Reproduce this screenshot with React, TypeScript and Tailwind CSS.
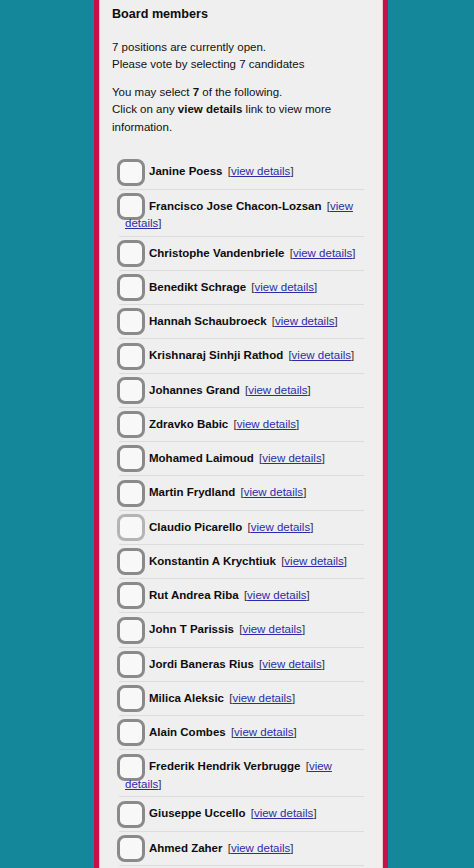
import React from "react";

const candidates = [
  "Janine Poess",
  "Francisco Jose Chacon-Lozsan",
  "Christophe Vandenbriele",
  "Benedikt Schrage",
  "Hannah Schaubroeck",
  "Krishnaraj Sinhji Rathod",
  "Johannes Grand",
  "Zdravko Babic",
  "Mohamed Laimoud",
  "Martin Frydland",
  "Claudio Picarello",
  "Konstantin A Krychtiuk",
  "Rut Andrea Riba",
  "John T Parissis",
  "Jordi Baneras Rius",
  "Milica Aleksic",
  "Alain Combes",
  "Frederik Hendrik Verbrugge",
  "Giuseppe Uccello",
  "Ahmed Zaher",
];

function CandidateRow({ name }: { name: string }) {
  // Claudio's box shows lighter in the shot (focused/pressed state)
  const faded = name === "Claudio Picarello";
  return (
    <li className="min-h-[34.25px] border-t border-[#dcdcdc] first:border-t-transparent pl-[6px] pt-[8px] pb-[3px] leading-[17.5px]">
      <span
        className={
          "inline-block align-middle ml-[-8px] mr-[4px] my-[-5px] w-[28px] h-[27px] rounded-[8px] border-[3px] bg-[#f8f8f8] " +
          (faded ? "border-[#b4b4b4]" : "border-[#8a8a8a]")
        }
      />
      <b className="font-bold text-[#0d0d0d]">{name}</b>{" "}
      <span className="ml-[2px] text-[#333]">
        [<a href="#" className="text-[#2c2ca8] underline">view details</a>]
      </span>
    </li>
  );
}

export default function App() {
  return (
    <div className="min-h-screen bg-[#15879a] font-['Liberation_Sans',Arial,sans-serif]">
      <div className="ml-[94px] w-[294px] border-x-[5px] border-[#c7114b] bg-[#efefef] shadow-[inset_1px_0_0_#efc3d0,inset_-1px_0_0_#efc3d0] pl-[13px] pr-[13px] pt-[6px] pb-[20px] text-[#111]">
        <h2 className="text-[12.6px] leading-[17px] font-bold text-[#0d0d0d]">Board members</h2>

        <p className="mt-[15.75px] text-[11.5px] leading-[17.5px]">
          7 positions are currently open.
          <br />
          Please vote by selecting 7 candidates
        </p>

        <p className="mt-[10px] text-[11.5px] leading-[17.5px]">
          You may select <b>7</b> of the following.
          <br />
          Click on any <b>view details</b> link to view more information.
        </p>

        <ul className="mt-[18px] ml-[7px] mr-[6px] text-[11.5px] border-b border-[#dcdcdc]">
          {candidates.map((c) => (
            <CandidateRow key={c} name={c} />
          ))}
        </ul>
      </div>
    </div>
  );
}
